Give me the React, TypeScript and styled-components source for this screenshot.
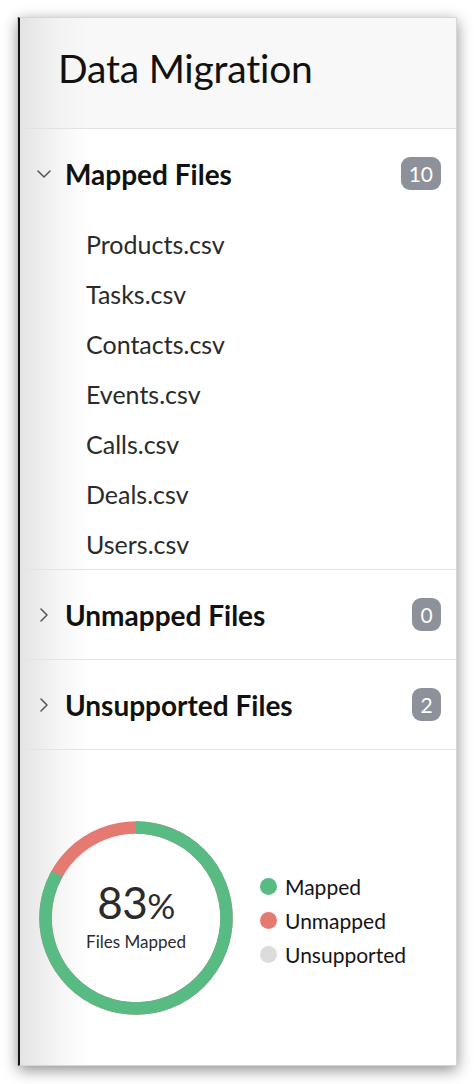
import styled, { createGlobalStyle } from 'styled-components';

const GlobalStyle = createGlobalStyle`
  html, body { margin: 0; padding: 0; background: #fff; }
  body { font-family: Lato, "Open Sans", Arial, sans-serif; }
`;

const Page = styled.div`
  padding: 17px 18px 18px 18px;
`;

const Panel = styled.aside`
  width: 436px;
  height: 1047px;
  display: flex;
  flex-direction: column;
  border: 1px solid #d6d6d6;
  border-left: 2px solid #141414;
  box-shadow: -1px 0 0 #c8c8c8, 0 4px 14px rgba(0, 0, 0, 0.45);
  background: linear-gradient(to right, #e4e4e4 0, #f6f6f6 40px, #fff 70px);
  overflow: hidden;
`;

const Header = styled.header`
  height: 111px;
  box-sizing: border-box;
  display: flex;
  align-items: center;
  padding: 0 0 10px 38px;
  border-bottom: 1px solid #e2e2e2;
  background: linear-gradient(to right, #e4e4e4 0, #f3f3f3 40px, #f8f8f8 70px);
`;

const Title = styled.h1`
  margin: 0;
  font-size: 39px;
  font-weight: 400;
  color: #111;
  letter-spacing: -0.2px;
`;

const Section = styled.section`
  border-bottom: 1px solid #e4e4e4;
`;

const SectionHead = styled.div`
  height: 89px;
  display: flex;
  align-items: center;
  padding: 0 15px 0 17px;
`;

const Chevron = styled.span`
  width: 14px;
  display: flex;
  justify-content: center;
  margin-right: 14px;
  color: #555;
`;

const SectionTitle = styled.h2`
  flex: 1;
  margin: 0;
  font-size: 28px;
  font-weight: 700;
  color: #111;
`;

const Badge = styled.span`
  min-width: 13px;
  height: 33px;
  padding: 0 8px;
  border-radius: 9px;
  background: #8d9199;
  color: #fff;
  font-size: 21px;
  display: flex;
  align-items: center;
  justify-content: center;
`;

const FileList = styled.ul`
  list-style: none;
  margin: 0;
  padding: 1px 0 0 66px;
`;

const FileItem = styled.li`
  height: 50px;
  display: flex;
  align-items: center;
  font-size: 25px;
  color: #2a2a2a;
`;

const ChartArea = styled.div`
  flex: 1;
  display: flex;
  align-items: flex-start;
  padding: 71px 0 0 19px;
`;

const Donut = styled.div`
  position: relative;
  width: 194px;
  height: 194px;
`;

const DonutLabel = styled.div`
  position: absolute;
  inset: 0;
  display: flex;
  flex-direction: column;
  align-items: center;
  justify-content: center;
  padding-bottom: 6px;
  color: #2b2b2b;
`;

const Percent = styled.div`
  font-size: 44px;
  line-height: 48px;
  letter-spacing: -0.5px;
  & span { font-size: 35px; }
`;

const Caption = styled.div`
  font-size: 17px;
  margin-top: 2px;
`;

const Legend = styled.ul`
  list-style: none;
  margin: 52px 0 0 27px;
  padding: 0;
  display: flex;
  flex-direction: column;
  gap: 8px;
`;

const LegendItem = styled.li`
  display: flex;
  align-items: center;
  gap: 8px;
  font-size: 21px;
  height: 26px;
  color: #151515;
`;

const Dot = styled.span<{ $color: string }>`
  width: 17px;
  height: 17px;
  border-radius: 50%;
  background: ${(p) => p.$color};
`;

const Down = () => (
  <svg width="14" height="8" viewBox="0 0 14 8" fill="none">
    <path d="M1 1l6 6 6-6" stroke="#555" strokeWidth="1.5" strokeLinecap="round" strokeLinejoin="round" />
  </svg>
);

const Right = () => (
  <svg width="8" height="14" viewBox="0 0 8 14" fill="none">
    <path d="M1 1l6 6-6 6" stroke="#555" strokeWidth="1.5" strokeLinecap="round" strokeLinejoin="round" />
  </svg>
);

const files = ['Products.csv', 'Tasks.csv', 'Contacts.csv', 'Events.csv', 'Calls.csv', 'Deals.csv', 'Users.csv'];

function Ring({ pct }: { pct: number }) {
  const r = 90.5;
  const c = 2 * Math.PI * r;
  const mapped = (pct / 100) * c;
  return (
    <svg width="194" height="194" viewBox="0 0 194 194">
      <circle cx="97" cy="97" r={r} fill="none" stroke="#e57a73" strokeWidth="12.5" />
      <circle
        cx="97"
        cy="97"
        r={r}
        fill="none"
        stroke="#58bb84"
        strokeWidth="12.5"
        strokeDasharray={`${mapped} ${c}`}
        transform="rotate(-90 97 97)"
      />
    </svg>
  );
}

export default function App() {
  return (
    <>
      <GlobalStyle />
      <Page>
        <Panel>
          <Header>
            <Title>Data Migration</Title>
          </Header>
          <Section>
            <SectionHead>
              <Chevron><Down /></Chevron>
              <SectionTitle>Mapped Files</SectionTitle>
              <Badge>10</Badge>
            </SectionHead>
            <FileList>
              {files.map((f) => (
                <FileItem key={f}>{f}</FileItem>
              ))}
            </FileList>
          </Section>
          <Section>
            <SectionHead>
              <Chevron><Right /></Chevron>
              <SectionTitle>Unmapped Files</SectionTitle>
              <Badge>0</Badge>
            </SectionHead>
          </Section>
          <Section>
            <SectionHead>
              <Chevron><Right /></Chevron>
              <SectionTitle>Unsupported Files</SectionTitle>
              <Badge>2</Badge>
            </SectionHead>
          </Section>
          <ChartArea>
            <Donut>
              <Ring pct={83} />
              <DonutLabel>
                <Percent>83<span>%</span></Percent>
                <Caption>Files Mapped</Caption>
              </DonutLabel>
            </Donut>
            <Legend>
              <LegendItem><Dot $color="#58bb84" />Mapped</LegendItem>
              <LegendItem><Dot $color="#e57a73" />Unmapped</LegendItem>
              <LegendItem><Dot $color="#dcdcdc" />Unsupported</LegendItem>
            </Legend>
          </ChartArea>
        </Panel>
      </Page>
    </>
  );
}
